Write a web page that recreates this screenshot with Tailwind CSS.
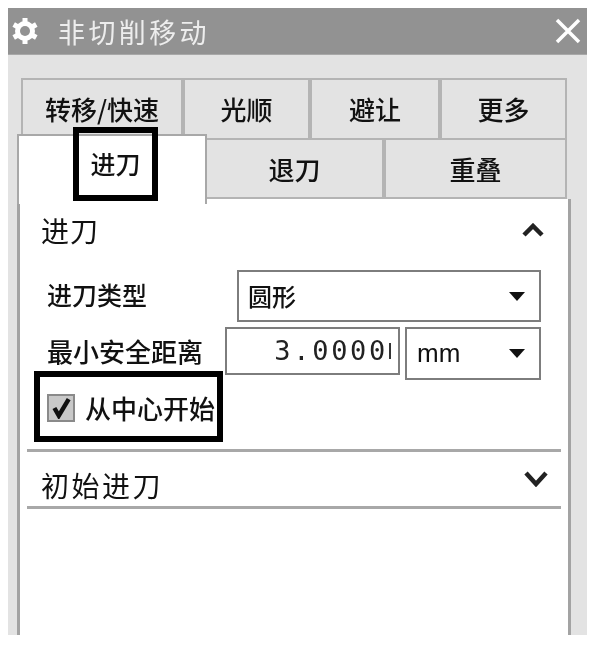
<!DOCTYPE html>
<html lang="zh"><head><meta charset="utf-8"><script src="https://cdn.jsdelivr.net/npm/@tailwindcss/browser@4"></script></head>
<body class="bg-white">
<div class="w-[594px] h-[647px] pt-[8px] pl-[8px] overflow-hidden bg-white text-[#111] font-['Noto_Sans_CJK_SC','Noto_Sans',sans-serif]">
  <div class="relative w-[579px] h-[627px] bg-[#e3e3e3] flex flex-col blur-[0.4px]">
    <div class="h-[47px] shrink-0 bg-[#929292] border-b border-[#a8a8a8] flex items-center pl-[2px] pr-[6px] text-white">
      <svg viewBox="0 0 30 30" class="w-[30px] h-[30px]"><g stroke="#fff" stroke-width="5"><path d="M15 2v26M3.700 8.500l22.600 13M3.700 21.500l22.600-13"/></g><circle cx="15" cy="15" r="10" fill="#fff"/><circle cx="15" cy="15" r="5" fill="#929292"/></svg>
      <span class="ml-[18px] text-[27px] tracking-[3.400px] leading-none text-[#ededed]">非切削移动</span>
      <svg viewBox="0 0 26 26" class="ml-auto w-[26px] h-[26px]"><path d="M2 2l22 22M24 2L2 24" stroke="#fff" stroke-width="3.500"/></svg>
    </div>
    <div class="relative flex-1 flex flex-col pt-[23px]">
      <div class="ml-[13px] w-[546px] h-[60px] shrink-0 flex border-2 border-b-0 border-[#b4b4b4] text-[26px] font-medium">
        <div class="w-[162px] border-r-4 border-[#b4b4b4] pb-[2px] flex items-center justify-center whitespace-nowrap">转移/快速</div>
        <div class="w-[127px] border-r-4 border-[#b4b4b4] pb-[2px] flex items-center justify-center">光顺</div>
        <div class="w-[130px] border-r-4 border-[#b4b4b4] pb-[2px] flex items-center justify-center">避让</div>
        <div class="flex-1 pb-[2px] flex items-center justify-center">更多</div>
      </div>
      <div class="ml-[13px] w-[546px] h-[61px] shrink-0 flex border-t-2 border-r-2 border-[#b4b4b4] text-[26px] font-medium">
        <div class="w-[186px]"></div>
        <div class="w-[179px] border-r-4 border-b-2 border-[#b4b4b4] flex items-center justify-center">退刀</div>
        <div class="flex-1 border-b-2 border-[#b4b4b4] flex items-center justify-center">重叠</div>
      </div>
      <div class="ml-[9px] w-[554px] flex-1 bg-white border-x-[3px] border-[#a3a3a3] px-[7px] flex flex-col">
        <div class="h-[68px] shrink-0 flex items-center justify-between pl-[14px] pr-[16px] pb-[6px] text-[28px]">
          <span class="tracking-[1px]">进刀</span>
          <svg viewBox="0 0 24 14" class="w-[24px] h-[14px]"><path d="M3 12l9-9 9 9" fill="none" stroke="#222" stroke-width="4.500"/></svg>
        </div>
        <div class="h-[58px] shrink-0 flex items-center pl-[20px]">
          <span class="w-[190px] text-[25px] font-medium pb-[2px]">进刀类型</span>
          <div class="w-[304px] h-[52px] border-2 border-[#7d7d7d] flex items-center justify-between pl-[9px] pr-[14px] text-[24px] font-medium"><span>圆形</span><svg viewBox="0 0 16 9" class="w-[16px] h-[9px]"><path d="M0 0h16L8 9z" fill="#111"/></svg></div>
        </div>
        <div class="h-[55px] shrink-0 flex items-start pl-[20px]">
          <span class="w-[178px] text-[26px] font-medium leading-[52px] whitespace-nowrap">最小安全距离</span>
          <div class="w-[175px] h-[48px] border-2 border-[#7d7d7d] mt-[2px] flex items-center justify-end overflow-hidden font-['DejaVu_Sans_Mono',monospace] text-[27px] tracking-[2.700px] whitespace-nowrap text-[#222]">3.0000<span class="w-[2px] h-[16px] bg-[#333] ml-[1px] mr-[7px]"></span></div>
          <div class="ml-[5px] w-[136px] h-[53px] border-2 border-[#7d7d7d] mt-[2px] flex items-center justify-between pl-[10px] pr-[14px] font-['Liberation_Sans',sans-serif] text-[26px]"><span>mm</span><svg viewBox="0 0 16 9" class="w-[16px] h-[9px]"><path d="M0 0h16L8 9z" fill="#111"/></svg></div>
        </div>
        <div class="h-[69px] shrink-0 flex items-center pl-[20px] pb-[14px]">
          <span class="w-[28px] h-[28px] border-2 border-[#8a8a8a] bg-[#c9c9c9] flex items-center justify-center"><svg viewBox="0 0 20 20" class="w-[22px] h-[22px]"><path d="M4 10l4 7 9-15" fill="none" stroke="#111" stroke-width="4"/></svg></span>
          <span class="ml-[10px] text-[26px] font-medium whitespace-nowrap">从中心开始</span>
        </div>
        <div class="h-[60px] shrink-0 border-y-[3px] border-[#a8a8a8] flex items-center justify-between pl-[14px] pr-[11px] pt-[12px] text-[28px]">
          <span class="tracking-[2.500px]">初始进刀</span>
          <svg viewBox="0 0 24 16" class="w-[24px] h-[16px] mb-[12px] mr-[2px]"><path d="M2 2l10 11L22 2" fill="none" stroke="#222" stroke-width="4.500"/></svg>
        </div>
      </div>
      <div class="absolute left-[9px] top-[79px] w-[190px] h-[70px] bg-white border-x-2 border-t-2 border-[#a8a8a8]"></div>
      <div class="absolute left-[65px] top-[72px] w-[85px] h-[74px] border-[6px] border-black flex items-center justify-center text-[25px] font-medium">进刀</div>
      <div class="absolute left-[26px] top-[316px] w-[189px] h-[71px] border-[6px] border-black"></div>
    </div>
  </div>
</div>
</body></html>
